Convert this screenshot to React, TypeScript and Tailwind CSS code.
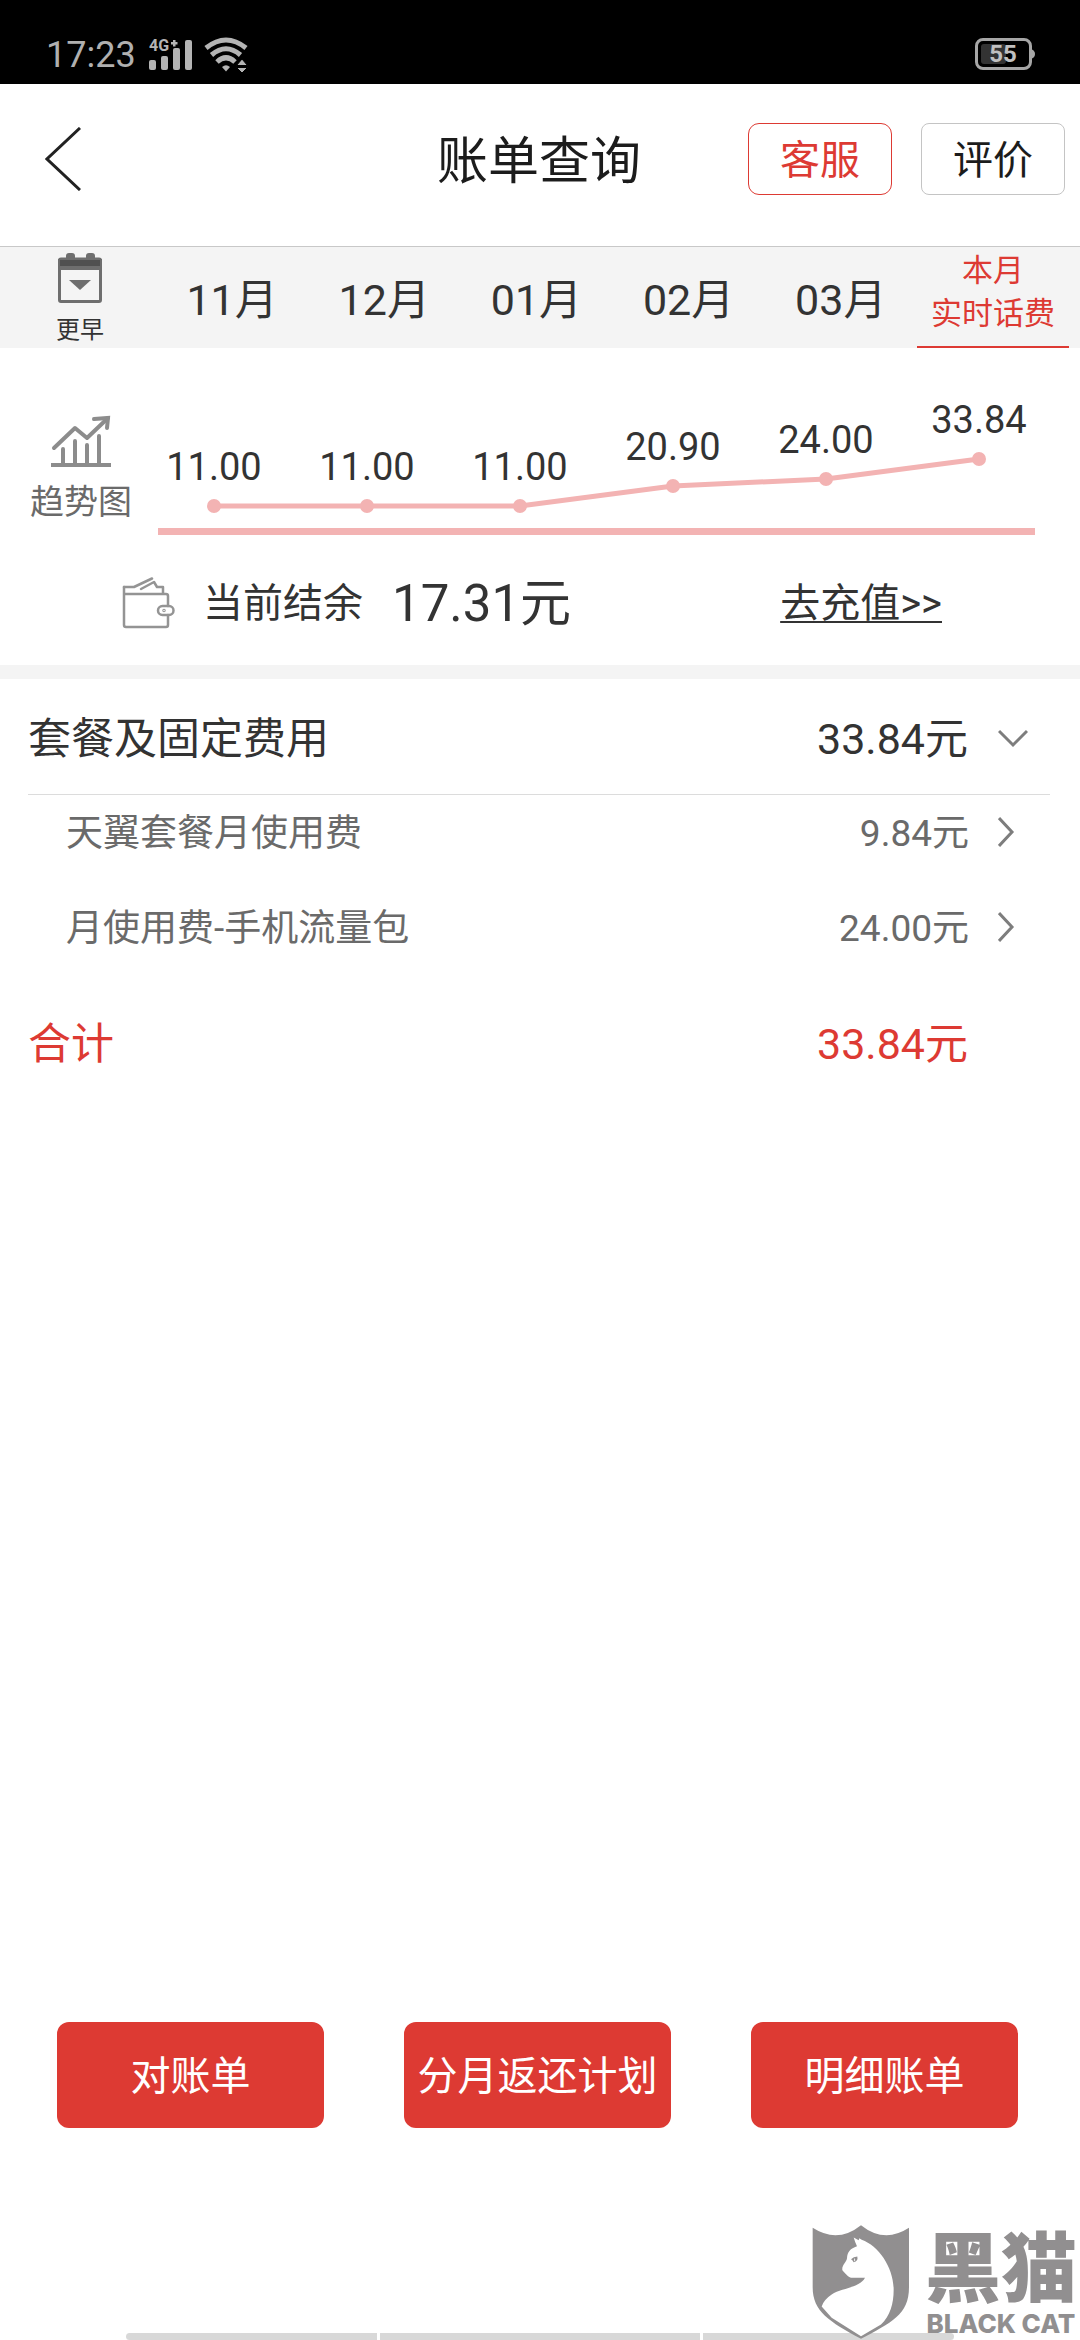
const months = ["11月", "12月", "01月", "02月", "03月"];

const trend = [
  { x: 56, y: 158, value: "11.00" },
  { x: 209, y: 158, value: "11.00" },
  { x: 362, y: 158, value: "11.00" },
  { x: 515, y: 138, value: "20.90" },
  { x: 668, y: 131, value: "24.00" },
  { x: 821, y: 111, value: "33.84" },
];

const items = [
  { name: "天翼套餐月使用费", amount: "9.84元" },
  { name: "月使用费-手机流量包", amount: "24.00元" },
];

const actions = ["对账单", "分月返还计划", "明细账单"];

function SignalIcon() {
  return (
    <svg width="44" height="32" viewBox="0 0 44 32" fill="#b4b4b4" className="overflow-visible" aria-hidden="true">
      <text x="0" y="12" fontSize="16" fontWeight="700">4G</text>
      <path d="M22 3h2v-2h2.500v2h2v2.500h-2v2h-2.500v-2h-2z" />
      <rect x="0" y="21" width="7" height="10" rx="2" />
      <rect x="12" y="17" width="7" height="14" rx="2" />
      <rect x="24" y="9" width="7" height="22" rx="2" />
      <rect x="36" y="1" width="7" height="30" rx="2" />
    </svg>
  );
}

function WifiIcon() {
  return (
    <svg width="44" height="36" viewBox="0 0 44 36" aria-hidden="true">
      <g fill="none" stroke="#b4b4b4" strokeWidth="5">
        <path d="M2 11Q22 -5 42 11" />
        <path d="M7.500 18Q22 5.500 36.500 18" />
        <path d="M13 25Q22 16.500 31 25" />
      </g>
      <path d="M18 30Q22 26.500 26 30L22 34.500Z" fill="#b4b4b4" />
      <path d="M32.500 28.500L38 22L43.500 28.500Z M32.500 30.500H43.500L38 36Z" fill="#b4b4b4" stroke="#000" strokeWidth="1" />
    </svg>
  );
}

function BatteryIcon() {
  return (
    <svg width="61" height="34" viewBox="0 0 61 34" aria-hidden="true">
      <rect x="6" y="6" width="25" height="20" rx="3" fill="#333" />
      <rect x="1.500" y="1.500" width="54" height="29" rx="6.500" fill="none" stroke="#a6a6a6" strokeWidth="3" />
      <path d="M57 11.500Q60 13 60 16Q60 19 57 20.500Z" fill="#a6a6a6" />
      <text x="28" y="24" fontSize="24" fontWeight="700" textAnchor="middle" fill="#c0c0c0">55</text>
    </svg>
  );
}

function CalendarIcon() {
  return (
    <svg width="46" height="51" viewBox="0 0 46 51" className="shrink-0" aria-hidden="true">
      <rect x="2.500" y="6" width="41" height="42.500" rx="1.500" fill="#f4f4f4" stroke="#6e6e6e" strokeWidth="3" />
      <path d="M1 6h44v11H1z" fill="#6e6e6e" />
      <path d="M3 7h40v6H3z" fill="#505050" />
      <path d="M9 6V3Q9 0 12 0h3Q18 0 18 3v3zM29 6V3Q29 0 32 0h3Q38 0 38 3v3z" fill="#6e6e6e" />
      <path d="M12 27h22L23 37z" fill="#6e6e6e" />
    </svg>
  );
}

function TrendIcon() {
  return (
    <svg width="60" height="52" viewBox="0 0 60 52" fill="none" stroke="#8c8c8c" strokeWidth="4" aria-hidden="true">
      <path d="M0 50H60" />
      <path d="M12 34V50M24 26V50M36 30V50M48 21V50" strokeLinecap="round" />
      <path d="M3 33L24 13L36 23L57 3" strokeLinecap="round" strokeLinejoin="round" />
      <path d="M43 4L57 3L56 13" strokeLinecap="round" />
    </svg>
  );
}

function WalletIcon() {
  return (
    <svg width="53" height="53" viewBox="0 1 53 53" fill="none" stroke="#949494" strokeWidth="2.500" strokeLinejoin="round" strokeLinecap="round" aria-hidden="true">
      <path d="M46 30V20Q46 18 44 18H2M2 11V49Q2 51 4 51H44Q46 51 46 49V39" />
      <path d="M2 11H12L30 2.500" />
      <path d="M19 13L32 6L35 11H41V17" />
      <rect x="36" y="30" width="15.500" height="9" rx="4.500" />
      <circle cx="42" cy="34.500" r="0.500" />
    </svg>
  );
}

function ChevronRight() {
  return (
    <svg width="30" height="30" viewBox="0 0 30 30" fill="none" stroke="#7d7d7d" strokeWidth="3" aria-hidden="true">
      <path d="M1 1L14 15L1 29" />
    </svg>
  );
}

function ChevronDown() {
  return (
    <svg width="30" height="30" viewBox="0 0 30 30" fill="none" stroke="#7d7d7d" strokeWidth="3" aria-hidden="true">
      <path d="M1 7L15 21L29 7" />
    </svg>
  );
}

function CatShield() {
  return (
    <svg width="100" height="117" viewBox="60 70 300 350" aria-hidden="true">
      <path
        d="M65 84Q140 132 210 76Q280 132 354 84V262C354 345 300 368 210 417C115 365 65 335 65 262Z"
        fill="#918f90"
      />
      <path
        d="M188 113L203 121L205 115L212 120C264 138 308 205 308 270C308 312 297 350 270 374L210 409L122 354L92 320Q98 300 122 284C152 264 207 264 222 234L180 234C165 226 160 217 154 211C152 195 166 188 168 175C169 155 178 146 198 139Q192 127 188 113Z"
        fill="#fff"
      />
      <path d="M180 178Q188 170 199 170Q202 184 188 187Q184 180 180 178Z" fill="#918f90" />
      <path d="M190 174L193 181L189 185Z" fill="#fff" />
    </svg>
  );
}

export default function App() {
  return (
    <div className="relative flex min-h-screen flex-col overflow-hidden bg-white font-[Roboto,'Noto_Sans_CJK_SC',sans-serif] text-[#333]">
      <div className="flex h-[84px] items-center justify-between bg-black pt-[26px] pr-[44px] pl-[46px]">
        <div className="flex items-center">
          <span className="w-[103px] text-[36px] leading-[46px] text-[#b0b0b0]">17:23</span>
          <SignalIcon />
          <span className="ml-[11px]">
            <WifiIcon />
          </span>
        </div>
        <BatteryIcon />
      </div>

      <header className="grid h-[163px] grid-cols-[1fr_auto_1fr] items-center border-b border-[#c8c8c8] pr-[15px] pb-3 pl-[45px]">
        <button type="button" aria-label="返回" className="justify-self-start">
          <svg width="36" height="64" viewBox="0 0 36 64" fill="none" stroke="#222" strokeWidth="3" aria-hidden="true">
            <path d="M35 1L2 32L35 63" />
          </svg>
        </button>
        <h1 className="pt-1.5 pr-8 text-[51px] leading-[72px] text-[#1c1c1c]">账单查询</h1>
        <div className="flex gap-[29px] justify-self-end">
          <button type="button" className="h-[72px] w-[144px] rounded-[11px] border border-[#dd3a33] pt-1 text-[40px] leading-[60px] text-[#dd3a33]">
            客服
          </button>
          <button type="button" className="h-[72px] w-[144px] rounded-lg border border-[#c4c4c4] pt-1 text-[40px] leading-[60px] text-[#1c1c1c]">
            评价
          </button>
        </div>
      </header>

      <nav className="flex h-[101px] bg-[#f4f4f4] pr-[11px]">
        <button type="button" className="flex w-[156px] shrink-0 flex-col items-center gap-2 pt-1.5 pl-1 text-[24px] leading-[36px]">
          <CalendarIcon />
          更早
        </button>
        {months.map((m) => (
          <button key={m} type="button" className="flex-1 pt-1 text-[43px] leading-[60px]">
            {m}
          </button>
        ))}
        <button
          type="button"
          aria-current="true"
          className="flex flex-1 flex-col items-center border-b-2 border-[#dd3a33] pt-0.5 text-[31px] leading-[43px] whitespace-nowrap text-[#dd3a33]"
        >
          <span>本月</span>
          <span>实时话费</span>
        </button>
      </nav>

      <section className="flex h-[205px] pr-[45px]">
        <div className="flex w-[158px] shrink-0 flex-col items-center pt-[67px] pl-1 text-[34px] leading-[70px] text-[#6a6a6a]">
          <TrendIcon />
          趋势图
        </div>
        <svg viewBox="0 0 877 205" className="h-auto w-full" role="img" aria-label="趋势图">
          <polyline points={trend.map((p) => `${p.x},${p.y}`).join(" ")} fill="none" stroke="#f3b3b3" strokeWidth="5" />
          {trend.map((p) => (
            <g key={p.x}>
              <circle cx={p.x} cy={p.y} r="7" fill="#f3b3b3" />
              <text x={p.x} y={p.y - 26} fontSize="38" textAnchor="middle" fill="#333">
                {p.value}
              </text>
            </g>
          ))}
          <rect x="0" y="180" width="877" height="7" fill="#f3b3b3" />
        </svg>
      </section>

      <section className="border-b-[14px] border-[#f4f4f4] pb-3">
        <div className="flex h-[100px] items-center pr-[138px] pl-[122px]">
          <WalletIcon />
          <span className="ml-[28px] pt-0.5 text-[40px] leading-[60px]">当前结余</span>
          <span className="ml-[29px] pt-0.5 text-[51px] leading-[60px]">17.31元</span>
          <a href="#recharge" className="ml-auto pt-0.5 text-[40px] leading-[60px] underline decoration-2 underline-offset-4">
            去充值&gt;&gt;
          </a>
        </div>
      </section>

      <section>
        <button
          type="button"
          aria-expanded="true"
          className="mx-[28px] flex h-[116px] w-[calc(100%-58px)] items-center border-b border-[#dcdcdc] pt-1 pr-[22px] text-[43px] leading-[60px]"
        >
          <span>套餐及固定费用</span>
          <span className="mr-[30px] ml-auto">33.84元</span>
          <ChevronDown />
        </button>
        <ul>
          {items.map((item) => (
            <li key={item.name}>
              <button
                type="button"
                className="flex h-[95px] w-full items-start pt-[13px] pr-[52px] pl-[66px] text-[37px] leading-[52px] text-[#6a6a6a]"
              >
                <span>{item.name}</span>
                <span className="mr-[29px] ml-auto">{item.amount}</span>
                <span className="flex h-[48px] items-center">
                  <ChevronRight />
                </span>
              </button>
            </li>
          ))}
        </ul>
        <p className="flex justify-between pt-[29px] pr-[112px] pl-[28px] text-[43px] leading-[60px] text-[#dd3a33]">
          <span>合计</span>
          <span>33.84元</span>
        </p>
      </section>

      <footer className="mt-auto flex gap-[80px] pr-[62px] pb-[212px] pl-[57px]">
        {actions.map((a) => (
          <button
            key={a}
            type="button"
            className="h-[106px] min-w-0 flex-1 rounded-xl bg-[#dd3a33] pt-1 text-[40px] leading-[60px] whitespace-nowrap text-white"
          >
            {a}
          </button>
        ))}
      </footer>

      <div className="absolute inset-x-[126px] bottom-0 flex h-[7px] gap-[3px]" aria-hidden="true">
        <span className="w-[251px] rounded-l-full bg-[#d8d8d8]" />
        <span className="flex-1 bg-[#d8d8d8]" />
        <span className="w-[251px] rounded-r-full bg-[#d8d8d8]" />
      </div>

      <div className="absolute right-[3px] bottom-0 flex items-end gap-[14px] text-[#918f90]">
        <CatShield />
        <div className="flex w-[152px] flex-col items-center">
          <span className="text-[76px] leading-[76px] font-black">黑猫</span>
          <span className="font-[Inter,sans-serif] text-[26px] leading-[32px] font-extrabold whitespace-nowrap">BLACK CAT</span>
        </div>
      </div>
    </div>
  );
}
